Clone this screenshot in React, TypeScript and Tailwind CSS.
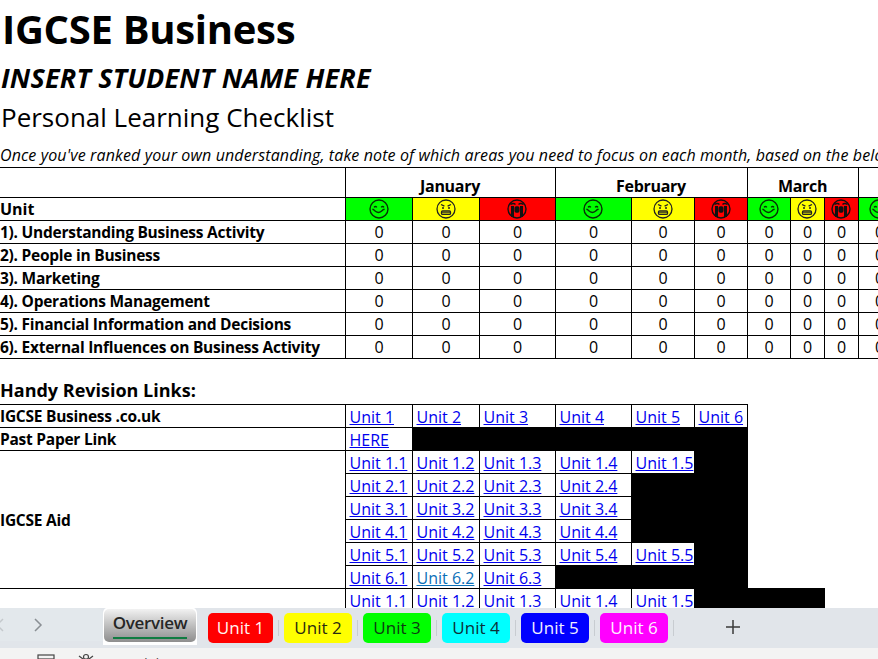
const font = { fontFamily: '"Open Sans", "Liberation Sans", sans-serif' };

const colWidths = [345, 67, 67, 76, 76, 63, 53, 43, 34, 34, 42];
const subjects = [
  '1). Understanding Business Activity',
  '2). People in Business',
  '3). Marketing',
  '4). Operations Management',
  '5). Financial Information and Decisions',
  '6). External Influences on Business Activity',
];

const Happy = () => (
  <svg width="20" height="20" viewBox="0 0 20 20" fill="none" stroke="#063006" strokeWidth="1.4" className="mx-auto block">
    <circle cx="10" cy="10" r="9" />
    <path d="M5 8.4q1.4-1.8 2.8 0M12.2 8.4q1.4-1.8 2.8 0" />
    <path d="M3.4 10.2q1.5.3 2 1.3q4 3.8 8 0q.5-1 2.2-1.3" />
  </svg>
);

const Grimace = () => (
  <svg width="20" height="20" viewBox="0 0 20 20" fill="none" stroke="#222" strokeWidth="1.3" className="mx-auto block">
    <circle cx="10" cy="10" r="9" />
    <path d="M5 5.5l3.4 1.7M15 5.5l-3.4 1.7" />
    <circle cx="7" cy="9" r="1" fill="#222" stroke="none" />
    <circle cx="13" cy="9" r="1" fill="#222" stroke="none" />
    <rect x="5.5" y="12" width="9" height="3.4" rx="1" />
    <path d="M5.5 13.7h9" strokeWidth="0.9" />
  </svg>
);

const Cry = () => (
  <svg width="20" height="20" viewBox="0 0 20 20" fill="none" stroke="#111" strokeWidth="1.4" className="mx-auto block">
    <circle cx="10" cy="10" r="9" />
    <path d="M3.5 5.5q3-2 5 0M11.5 5.5q2-2 5 0" />
    <path d="M5.5 7v11M14.5 7v11" strokeWidth="3" />
    <rect x="8.2" y="8" width="3.6" height="5" rx="1" fill="#111" />
  </svg>
);

const moodCells = [
  ['bg-[#00ff00]', Happy],
  ['bg-[#ffff00]', Grimace],
  ['bg-[#ff0000]', Cry],
] as const;

type LinkRow = { label?: string; rowSpan?: number; hidden?: boolean; links: string[]; black: number };

const linkRows: LinkRow[] = [
  { label: 'IGCSE Business .co.uk', links: ['Unit 1', 'Unit 2', 'Unit 3', 'Unit 4', 'Unit 5', 'Unit 6'], black: 0 },
  { label: 'Past Paper Link', links: ['HERE'], black: 5 },
  { label: 'IGCSE Aid', rowSpan: 6, links: ['Unit 1.1', 'Unit 1.2', 'Unit 1.3', 'Unit 1.4', 'Unit 1.5'], black: 1 },
  { hidden: true, links: ['Unit 2.1', 'Unit 2.2', 'Unit 2.3', 'Unit 2.4'], black: 2 },
  { hidden: true, links: ['Unit 3.1', 'Unit 3.2', 'Unit 3.3', 'Unit 3.4'], black: 2 },
  { hidden: true, links: ['Unit 4.1', 'Unit 4.2', 'Unit 4.3', 'Unit 4.4'], black: 2 },
  { hidden: true, links: ['Unit 5.1', 'Unit 5.2', 'Unit 5.3', 'Unit 5.4', 'Unit 5.5'], black: 1 },
  { hidden: true, links: ['Unit 6.1', 'Unit 6.2', 'Unit 6.3'], black: 3 },
  { label: '', links: ['Unit 1.1', 'Unit 1.2', 'Unit 1.3', 'Unit 1.4', 'Unit 1.5'], black: 3 },
];

const tabs = [
  ['Unit 1', 'bg-[#ff0000] text-[#fff4f0]', 'w-[65px]'],
  ['Unit 2', 'bg-[#ffff00] text-[#2a2a10]', 'w-[68px]'],
  ['Unit 3', 'bg-[#00ff00] text-[#0d3a12]', 'w-[68px]'],
  ['Unit 4', 'bg-[#00ffff] text-[#0c3038]', 'w-[68px]'],
  ['Unit 5', 'bg-[#0000ff] text-[#f0f0ff]', 'w-[68px]'],
  ['Unit 6', 'bg-[#ff00ff] text-[#fff0ff]', 'w-[68px]'],
];

const Cols = () => (
  <colgroup>
    {colWidths.map((w, i) => (
      <col key={i} style={{ width: w }} />
    ))}
  </colgroup>
);

export default function App() {
  const cell = 'border border-black p-0 h-[23px]';

  return (
    <div style={font} className="w-[878px] h-[659px] overflow-hidden bg-white flex flex-col text-black">
      {/* sheet */}
      <div className="h-[608px] overflow-hidden shrink-0">
        <div className="h-[58px] pl-[2px] pt-[3px] text-[40px] leading-[52px] font-bold tracking-[-0.3px] whitespace-nowrap">IGCSE Business</div>
        <div className="h-[40px] pl-[1px] text-[27px] leading-[40px] font-bold italic tracking-[0.2px] whitespace-nowrap">INSERT STUDENT NAME HERE</div>
        <div className="h-[38px] pl-[1px] text-[26px] leading-[38px] whitespace-nowrap">Personal Learning Checklist</div>
        <div className="h-[31px] pt-[7px] text-[16px] leading-[25px] italic tracking-[0.12px] whitespace-nowrap">
          Once you've ranked your own understanding, take note of which areas you need to focus on each month, based on the below
        </div>

        <table className="table-fixed border-collapse w-[900px] text-[16px] leading-[20px]">
          <Cols />
          <tbody>
            <tr className="h-[30px]">
              <td className="border border-black border-l-0 p-0" />
              <td colSpan={3} className="border border-black p-0 text-center font-bold pt-[7px] tracking-[-0.3px]">January</td>
              <td colSpan={3} className="border border-black p-0 text-center font-bold pt-[7px] tracking-[-0.3px]">February</td>
              <td colSpan={3} className="border border-black p-0 text-center font-bold pt-[7px] tracking-[-0.3px]">March</td>
              <td className="border border-black p-0" />
            </tr>
            <tr>
              <td className={`${cell} border-l-0 font-bold`}>Unit</td>
              {colWidths.slice(1).map((_, i) => {
                const [bg, Icon] = moodCells[i % 3];
                return (
                  <td key={i} className={`${cell} ${bg}`}>
                    <Icon />
                  </td>
                );
              })}
            </tr>
            {subjects.map((name) => (
              <tr key={name}>
                <td className={`${cell} border-l-0 font-bold text-[15.5px] tracking-[-0.25px] whitespace-nowrap`}>{name}</td>
                {colWidths.slice(1).map((_, i) => (
                  <td key={i} className={`${cell} text-center pl-[1px]`}>0</td>
                ))}
              </tr>
            ))}
          </tbody>
        </table>

        <div className="h-[45px] pt-[19px] text-[18px] leading-[24px] font-bold whitespace-nowrap">Handy Revision Links:</div>

        <table className="table-fixed border-collapse w-[900px] text-[16px] leading-[20px]">
          <Cols />
          <tbody>
            {linkRows.map((row, r) => (
              <tr key={r}>
                {!row.hidden && (
                  <td rowSpan={row.rowSpan} className={`${cell} border-l-0 font-bold text-[15.5px] tracking-[-0.25px]`}>{row.label}</td>
                )}
                {row.links.map((text) => (
                  <td key={text} className={`${cell} pl-[4px] pt-[1px] whitespace-nowrap`}>
                    <a href="#" className={`underline ${text === 'Unit 6.2' ? 'text-[#0b6fb8]' : 'text-[#0000ee]'}`}>{text}</a>
                  </td>
                ))}
                {row.black > 0 && <td colSpan={row.black} className={`${cell} bg-black`} />}
              </tr>
            ))}
          </tbody>
        </table>
      </div>

      {/* sheet tabs */}
      <div className="h-[40px] shrink-0 bg-[#e1e5ea] flex text-[#555] relative">
        <div className="w-[103px] h-[33px] bg-[#e3e8ec] rounded-tr-[6px] flex items-center text-[#8a8f94]">
          <svg width="6" height="16" viewBox="6 0 6 16" fill="none" stroke="#c4c8cc" strokeWidth="1.5">
            <path d="M9 2l-6 6 6 6" />
          </svg>
          <svg width="12" height="16" viewBox="0 0 12 16" fill="none" stroke="currentColor" strokeWidth="1.5" className="ml-[26px]">
            <path d="M3 2l6 6-6 6" />
          </svg>
        </div>
        <div className="w-[94px] h-[38px] bg-white rounded-t-[6px] -mt-px pt-[2px] px-[1px] shrink-0">
          <div className="h-[33px] rounded-[5px] bg-linear-to-b from-[#f2f2f2] to-[#8e8e8e] text-[#262626] text-[17px] font-semibold leading-[28px] text-center tracking-[-0.3px] relative">
            Overview
            <div className="absolute left-[9px] right-[9px] bottom-[3px] h-[2px] bg-[#107c41]" />
          </div>
        </div>
        <div className="flex items-start pt-[5px] pl-[6px]">
          {tabs.map(([text, color, width]) => (
            <div key={text} className="flex">
              <div className={`${width} ${color} h-[30px] rounded-[5px] ml-[5px] mr-[5px] text-[17px] leading-[30px] text-center`}>{text}</div>
              <div className="w-px h-[16px] mt-[7px] bg-[#c8ccd1]" />
            </div>
          ))}
        </div>
        <svg width="16" height="16" viewBox="0 0 16 16" stroke="#3a3a3a" strokeWidth="1.5" className="ml-[51px] mt-[11px]">
          <path d="M8 1v14M1 8h14" />
        </svg>
      </div>

      {/* status bar, cut by the window */}
      <div className="h-[11px] shrink-0 bg-[#f3f3f3] overflow-hidden flex items-start text-[#444] text-[13px] leading-[18px] pt-[6px]">
        <svg width="18" height="14" viewBox="0 0 18 14" fill="none" stroke="#444" strokeWidth="1.2" className="ml-[37px] shrink-0">
          <rect x="1" y="1" width="16" height="12" />
          <path d="M1 5h16" />
        </svg>
        <svg width="18" height="18" viewBox="0 0 18 18" fill="none" stroke="#444" strokeWidth="1.2" className="ml-[22px] shrink-0 -mt-px">
          <circle cx="9" cy="4" r="2.5" />
          <path d="M2 3l4 3h6l4-3M9 7v6" />
        </svg>
        <span className="ml-[5px] tracking-[0.1px]">Accessibility: Investigate</span>
      </div>
    </div>
  );
}
